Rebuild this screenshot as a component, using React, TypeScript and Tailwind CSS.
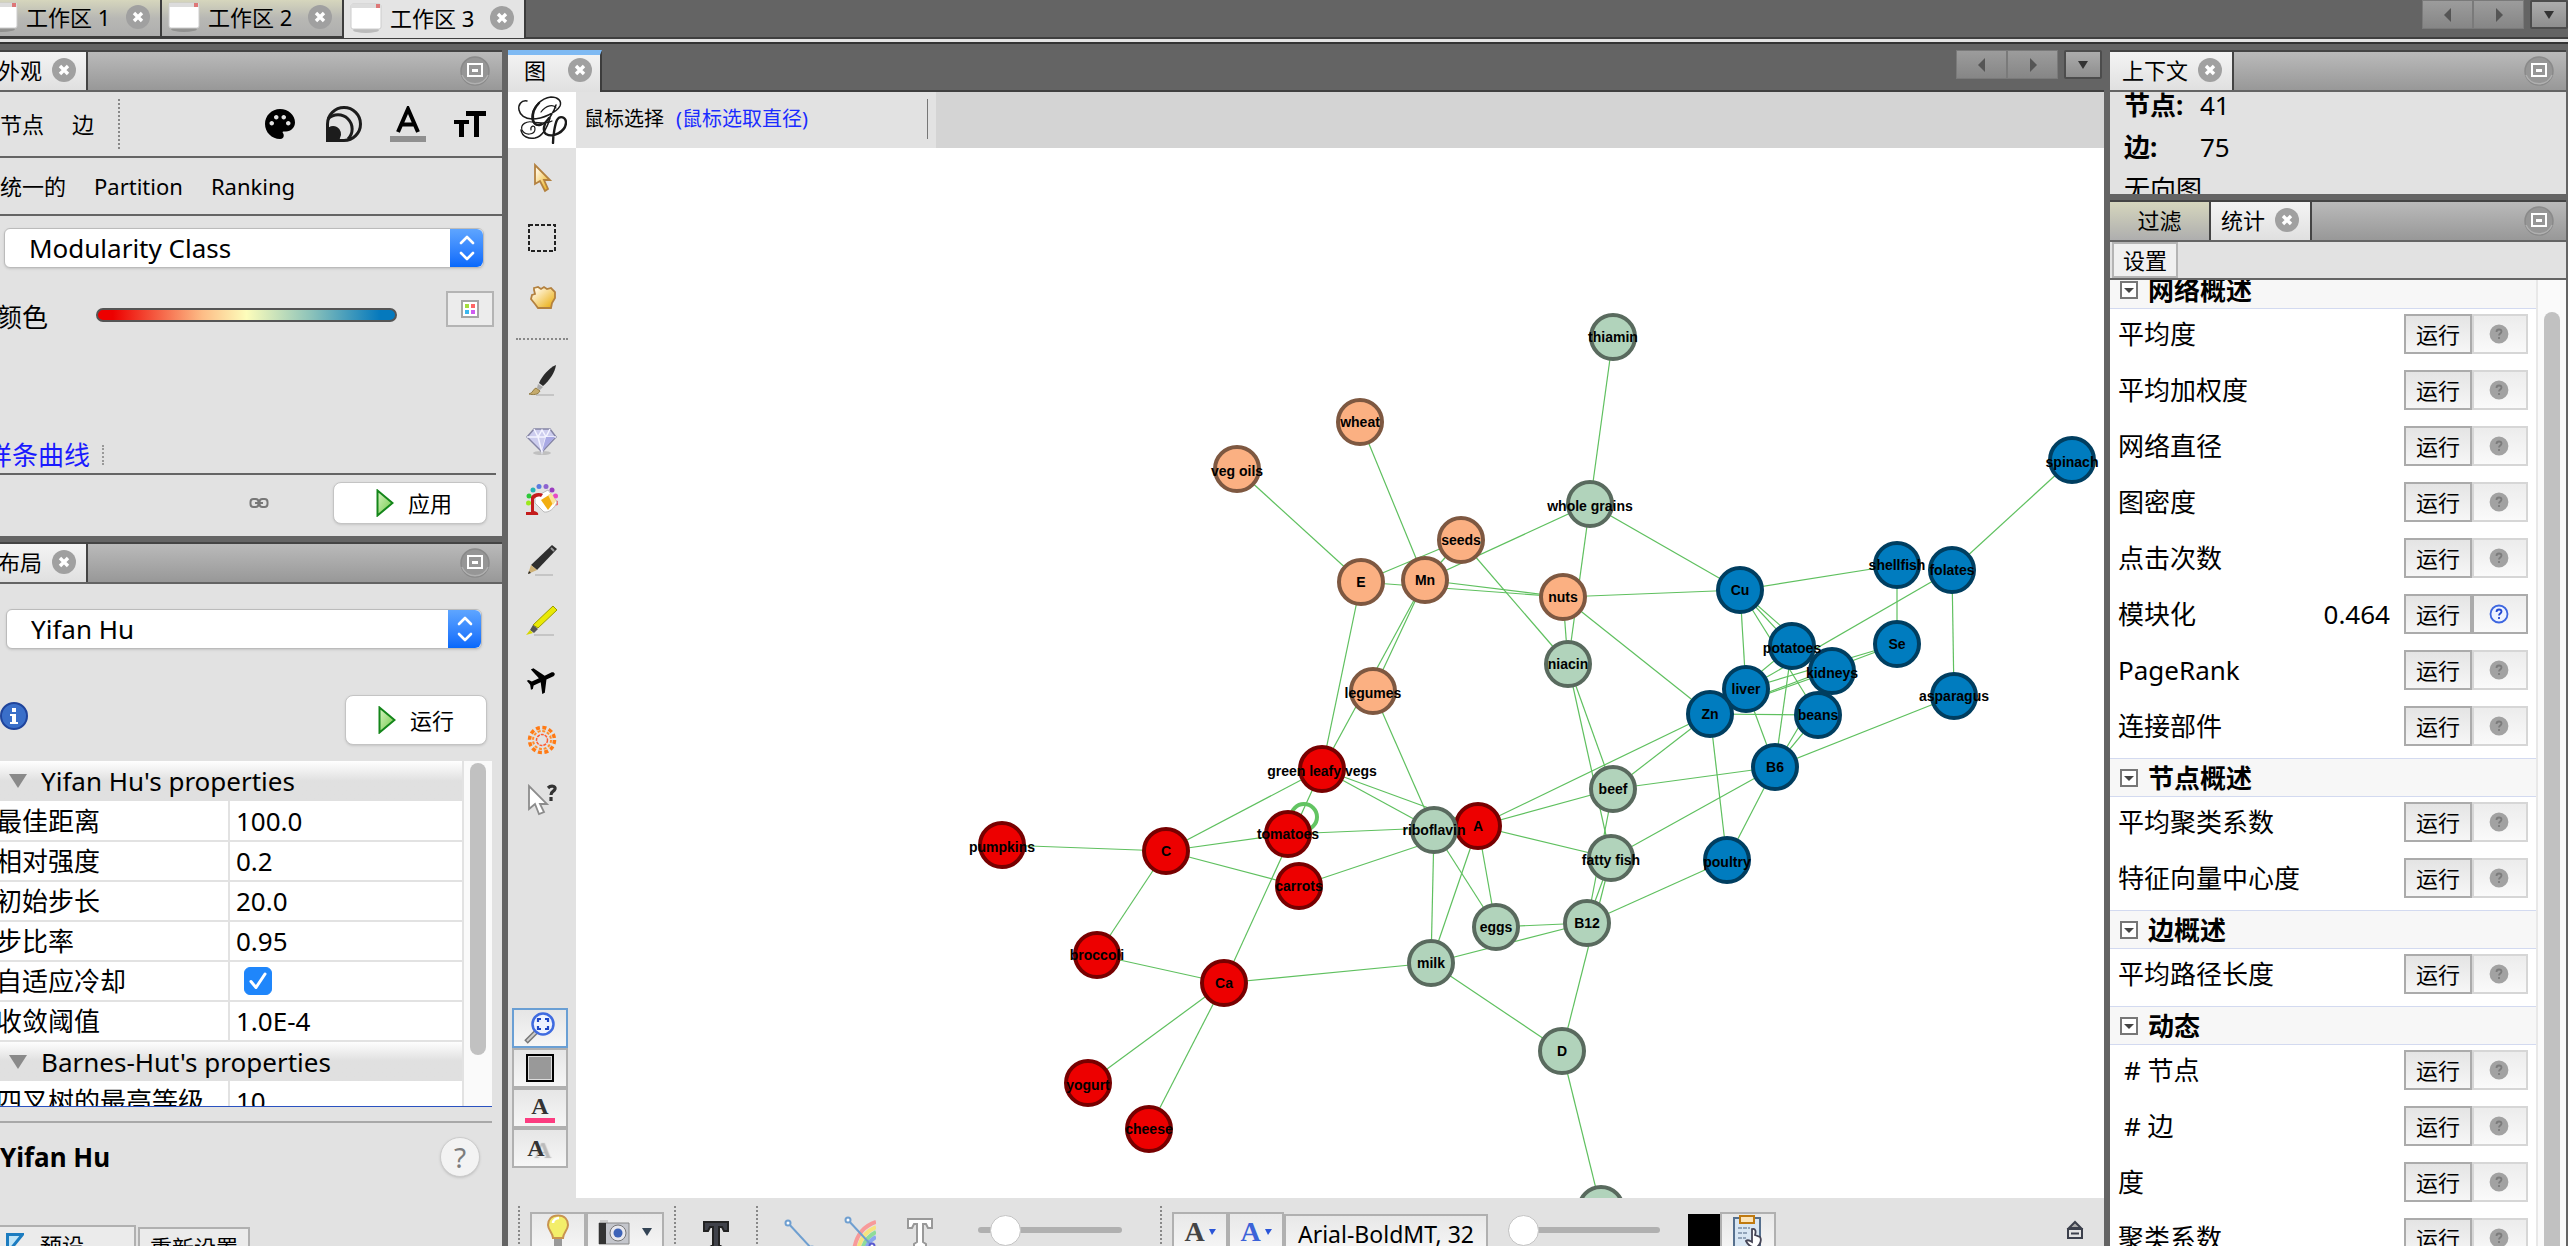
import React, { useState } from 'react';
import { MdPalette, MdFlight } from 'react-icons/md';
import clsx from 'clsx';

type Group = 'red' | 'orange' | 'green' | 'blue';

const groups: Record<Group, { fill: string; stroke: string }> = {
  red: { fill: '#ed0000', stroke: '#770000' },
  orange: { fill: '#fbb082', stroke: '#7e5841' },
  green: { fill: '#b1d3bb', stroke: '#596a5e' },
  blue: { fill: '#007cbf', stroke: '#003e60' },
};

const nodes: [string, number, number, Group][] = [
  ['thiamin', 1613, 337, 'green'],
  ['wheat', 1360, 422, 'orange'],
  ['veg oils', 1237, 469, 'orange'],
  ['whole grains', 1590, 504, 'green'],
  ['seeds', 1461, 540, 'orange'],
  ['E', 1361, 582, 'orange'],
  ['Mn', 1425, 580, 'orange'],
  ['nuts', 1563, 597, 'orange'],
  ['niacin', 1568, 664, 'green'],
  ['legumes', 1373, 691, 'orange'],
  ['green leafy vegs', 1322, 769, 'red'],
  ['beef', 1613, 789, 'green'],
  ['spinach', 2072, 460, 'blue'],
  ['shellfish', 1897, 565, 'blue'],
  ['folates', 1952, 570, 'blue'],
  ['Cu', 1740, 590, 'blue'],
  ['potatoes', 1792, 646, 'blue'],
  ['Se', 1897, 644, 'blue'],
  ['kidneys', 1832, 671, 'blue'],
  ['liver', 1746, 689, 'blue'],
  ['Zn', 1710, 714, 'blue'],
  ['beans', 1818, 715, 'blue'],
  ['asparagus', 1954, 696, 'blue'],
  ['B6', 1775, 767, 'blue'],
  ['poultry', 1727, 860, 'blue'],
  ['pumpkins', 1002, 845, 'red'],
  ['C', 1166, 851, 'red'],
  ['tomatoes', 1288, 834, 'red'],
  ['carrots', 1299, 886, 'red'],
  ['broccoli', 1097, 955, 'red'],
  ['Ca', 1224, 983, 'red'],
  ['yogurt', 1088, 1083, 'red'],
  ['cheese', 1149, 1129, 'red'],
  ['A', 1478, 826, 'red'],
  ['riboflavin', 1434, 830, 'green'],
  ['fatty fish', 1611, 858, 'green'],
  ['eggs', 1496, 927, 'green'],
  ['B12', 1587, 923, 'green'],
  ['milk', 1431, 963, 'green'],
  ['D', 1562, 1051, 'green'],
  ['', 1601, 1209, 'green'],
];

const edges: Record<string, string[]> = {
  'whole grains': ['thiamin', 'Mn', 'Cu', 'niacin'],
  Mn: ['wheat', 'seeds', 'nuts', 'legumes', 'green leafy vegs'],
  E: ['veg oils', 'seeds', 'nuts', 'green leafy vegs'],
  niacin: ['seeds', 'nuts', 'beef', 'fatty fish'],
  Cu: ['nuts', 'shellfish', 'potatoes', 'kidneys', 'beans', 'liver'],
  Zn: ['nuts', 'beef', 'A', 'liver', 'beans', 'potatoes', 'kidneys', 'poultry'],
  Se: ['shellfish', 'liver', 'Zn'],
  folates: ['spinach', 'liver', 'asparagus'],
  B6: ['asparagus', 'beans', 'kidneys', 'potatoes', 'liver', 'beef', 'fatty fish', 'poultry'],
  A: ['beef', 'fatty fish', 'eggs', 'milk', 'carrots', 'tomatoes', 'green leafy vegs'],
  riboflavin: ['green leafy vegs', 'legumes', 'milk', 'eggs'],
  C: ['green leafy vegs', 'tomatoes', 'carrots', 'pumpkins', 'broccoli'],
  Ca: ['green leafy vegs', 'broccoli', 'yogurt', 'cheese', 'milk'],
  B12: ['eggs', 'milk', 'beef', 'fatty fish', 'poultry'],
  D: ['milk', 'fatty fish', ''],
};

const byName = Object.fromEntries(nodes.map((n) => [n[0], n]));

// Labels with both ascenders and descenders hang a little lower
const labelShift = (label: string) => (/[gpy]/.test(label) && /[bdfhklt]/.test(label) ? 7 : 5);

function Graph() {
  return (
    <svg className="block h-full w-full" viewBox="576 148 1528 1050" preserveAspectRatio="xMidYMid slice">
      <g stroke="#5fc05f" strokeWidth="1.2">
        {Object.entries(edges).flatMap(([from, list]) =>
          list.map((to) => (
            <line key={from + '-' + to} x1={byName[from][1]} y1={byName[from][2]} x2={byName[to][1]} y2={byName[to][2]} />
          ))
        )}
      </g>
      <circle cx="1304" cy="817" r="13" fill="none" stroke="#62c462" strokeWidth="4" />
      {nodes.map(([label, x, y, group]) => (
        <circle key={label} cx={x} cy={y} r="22" fill={groups[group].fill} stroke={groups[group].stroke} strokeWidth="4" />
      ))}
      <g fontFamily="'Liberation Sans', Arial, sans-serif" fontWeight="700" fontSize="14" textAnchor="middle">
        {nodes.map(([label, x, y]) => (
          <text key={label} x={x} y={y + labelShift(label)}>{label}</text>
        ))}
      </g>
    </svg>
  );
}

function CloseButton() {
  return (
    <button type="button" aria-label="关闭" className="shrink-0">
      <svg width="24" height="24" viewBox="0 0 24 24">
        <circle cx="12" cy="12" r="12" fill="#a0a0a0" />
        <path d="M8 8l8 8M16 8l-8 8" stroke="#fff" strokeWidth="3.4" />
      </svg>
    </button>
  );
}

function MinimizeButton() {
  return (
    <button type="button" aria-label="最小化" className="mr-3 ml-auto">
      <svg width="30" height="30" viewBox="0 0 30 30">
        <circle cx="15" cy="15" r="14" fill="#969696" stroke="#8a8a8a" strokeWidth="1.5" />
        <path d="M2 19a14 14 0 0 0 26 0" fill="none" stroke="#b0b0b0" strokeWidth="1.5" />
        <path d="M8 8h14v12H8z" fill="none" stroke="#fff" strokeWidth="2" />
        <path d="M12 13h6v3h-6z" fill="#fff" />
      </svg>
    </button>
  );
}

function ScrollButtons() {
  const box = 'flex items-center justify-center bg-gradient-to-b from-[#9c9c9c] to-[#868686] border border-[#7a7a7a]';
  return (
    <div className="flex h-[29px]">
      <button type="button" aria-label="向左" className={clsx(box, 'w-[51px]')}>
        <svg width="8" height="14"><path d="M7 0v14L0 7z" fill="#555" /></svg>
      </button>
      <button type="button" aria-label="向右" className={clsx(box, 'w-[51px]')}>
        <svg width="8" height="14"><path d="M1 0v14l7-7z" fill="#555" /></svg>
      </button>
      <button type="button" aria-label="列表" className="ml-1.5 flex w-[38px] items-center justify-center rounded-xs border-2 border-[#4c4c4c] bg-gradient-to-b from-[#acacac] to-[#8e8e8e]">
        <svg width="10" height="8"><path d="M0 0h10L5 8z" fill="#333" /></svg>
      </button>
    </div>
  );
}

function WorkspaceTab({ label, active }: { label: string; active?: boolean }) {
  return (
    <div
      className={clsx(
        'flex h-[38px] w-[182px] items-center border-r-2 border-[#3c3c3c] pb-0.5 pl-1.5',
        active ? 'bg-[#e4e4e4]' : 'border-b-2 bg-gradient-to-b from-[#d6d6bd] via-[#b8b8b4] to-[#aeaeae]'
      )}
    >
      <svg width="32" height="30" viewBox="0 0 32 30" className="mr-2 shrink-0">
        <ellipse cx="16" cy="27" rx="13" ry="3" fill="#000" opacity=".18" />
        <rect x="1" y="1" width="30" height="25" rx="2" fill="#fff" stroke="#ccc" />
        <path d="M1 1h30v4H1z" fill="#dcdcdc" />
        <path d="M26 1h4v4h-4z" fill="#d77" />
      </svg>
      <button type="button" className="mr-4 whitespace-nowrap">{label}</button>
      <CloseButton />
    </div>
  );
}

function PanelHeader({ children }: { children: React.ReactNode }) {
  return (
    <div className="flex h-[42px] shrink-0 items-center border-t-2 border-b-2 border-t-[#444] border-b-[#646464] bg-gradient-to-b from-[#bababa] to-[#989898]">
      {children}
      <MinimizeButton />
    </div>
  );
}

function ActiveTab({ label, className }: { label: string; className: string }) {
  return (
    <div className={clsx('flex h-full items-center border-r-2 border-[#444] bg-gradient-to-b from-[#f4f4f4] to-[#e0e0e0] pb-0.5 whitespace-nowrap', className)}>
      <button type="button">{label}</button>
      <CloseButton />
    </div>
  );
}

function Dropdown({ label, value }: { label: string; value: string }) {
  return (
    <div className="relative flex h-10 rounded-md border border-[#bbb] bg-white shadow-sm">
      <select aria-label={label} className="h-full w-full appearance-none pl-6 text-[26px] leading-8 outline-none">
        <option>{value}</option>
      </select>
      <span className="pointer-events-none absolute inset-y-0 right-0 flex w-[33px] items-center justify-center rounded-r-md bg-gradient-to-b from-[#5ea5ff] to-[#0568fb]">
        <svg width="16" height="26" viewBox="0 0 16 26" fill="none" stroke="#fff" strokeWidth="2.6" strokeLinecap="round" strokeLinejoin="round">
          <path d="M2 8l6-6 6 6M2 18l6 6 6-6" />
        </svg>
      </span>
    </div>
  );
}

function PlayIcon() {
  return (
    <svg width="18" height="28" viewBox="0 0 18 28">
      <defs>
        <linearGradient id="play" x1="0" y1="0" x2="1" y2="1">
          <stop offset="0" stopColor="#d8f3c4" />
          <stop offset="1" stopColor="#6ec943" />
        </linearGradient>
      </defs>
      <path d="M1.5 1.5l15 12.5-15 12.5z" fill="url(#play)" stroke="#14861a" strokeWidth="2" />
    </svg>
  );
}

function DottedLine() {
  return <span className="h-[50px] w-0 shrink-0 border-l-2 border-dotted border-[#888]" />;
}

function AppearancePanel() {
  return (
    <section className="flex h-[486px] shrink-0 flex-col overflow-hidden bg-[#e2e2e2]">
      <PanelHeader>
        <ActiveTab label="外观" className="-ml-1 w-[92px] gap-2.5 pl-0.5" />
      </PanelHeader>
      <div className="flex h-[66px] shrink-0 items-center border-b-2 border-[#646464]">
        <button type="button">节点</button>
        <button type="button" className="mr-6 ml-7">边</button>
        <DottedLine />
        <div className="mr-4 ml-auto flex items-center gap-7">
          <button type="button" aria-label="颜色"><MdPalette className="h-9 w-9" /></button>
          <button type="button" aria-label="大小">
            <svg width="36" height="36" viewBox="0 0 36 36" fill="none" stroke="#1c1c1c" strokeWidth="3">
              <path d="M1.5 18a16.500 16.500 0 1 1 16.500 16.500H1.500z" />
              <path d="M2 13a11.500 11.500 0 1 1 20 20" />
              <path d="M0 24a8 8 0 0 1 14 8l-1 4H0z" fill="#1c1c1c" stroke="none" />
            </svg>
          </button>
          <button type="button" aria-label="标签颜色">
            <svg width="36" height="36" viewBox="0 0 36 36">
              <path d="M8 26L18 3l10 23M11 18.500h14" fill="none" stroke="#000" strokeWidth="4" />
              <path d="M0 30h36v6H0z" fill="#909090" />
            </svg>
          </button>
          <button type="button" aria-label="标签大小">
            <svg width="32" height="26" viewBox="0 0 32 26">
              <path d="M12 0h20v5h-7v21h-5V5h-8zM0 9h15v4h-5v13H5V13H0z" />
            </svg>
          </button>
        </div>
      </div>
      <div className="flex h-[58px] shrink-0 items-center gap-7 border-b-2 border-[#646464]">
        <button type="button">统一的</button>
        <button type="button">Partition</button>
        <button type="button">Ranking</button>
      </div>
      <div className="mt-3 mr-[18px] ml-1">
        <Dropdown label="属性" value="Modularity Class" />
      </div>
      <div className="-ml-1 mt-[22px] flex h-[38px] shrink-0 items-center">
        <span className="w-[100px] pt-4 text-[26px]">颜色</span>
        <span className="mt-3 h-[14px] w-[301px] rounded-full border-2 border-[#555] bg-[linear-gradient(to_right,#ed0000_5%,#fdbc86_35%,#fdfdbb_50%,#8bc2ba_72%,#0579bd_95%)]" />
        <button type="button" aria-label="调色板" className="mr-2 ml-auto flex h-9 w-12 items-center justify-center border-2 border-[#b4b4b4] bg-[#ececec]">
          <svg width="18" height="18" viewBox="0 0 18 18">
            <rect x="1" y="1" width="16" height="16" fill="#fff" stroke="#a5a5a5" strokeWidth="2" />
            <path d="M4 4h4v4H4z" fill="#a4dd3c" />
            <path d="M10 4h4v4h-4z" fill="#f66" />
            <path d="M4 10h4v4H4z" fill="#3ab7ee" />
            <path d="M10 10h4v4h-4z" fill="#cf5cf0" />
          </svg>
        </button>
      </div>
      <div className="mt-auto mr-1.5 flex items-center border-b-2 border-[#646464]">
        <a href="#spline" className="-ml-3.5 text-[26px] leading-9 text-[#1a1aff]">样条曲线</a>
        <span className="ml-3 h-5 border-l-2 border-dotted border-[#999]" />
      </div>
      <div className="mr-[15px] flex h-[61px] shrink-0 items-center justify-end gap-16 pb-1.5">
        <svg width="20" height="12" viewBox="0 0 20 12" fill="none" stroke="#777" strokeWidth="2">
          <rect x="1.5" y="2" width="8" height="8" rx="3" />
          <rect x="10.5" y="2" width="8" height="8" rx="3" />
          <path d="M6 6h8" />
        </svg>
        <button type="button" className="flex h-[42px] w-[154px] items-center justify-center gap-3.5 rounded-lg border border-[#c4c4c4] bg-white pl-2 shadow-sm">
          <PlayIcon />
          应用
        </button>
      </div>
    </section>
  );
}

function CategoryRow({ title }: { title: string }) {
  return (
    <tr className="h-10 bg-gradient-to-b from-white to-[#e0e0e0] to-50%">
      <th colSpan={2} className="pl-[9px] text-left font-normal">
        <span className="flex items-center gap-3.5">
          <svg width="18" height="14"><path d="M0 0h18L9 14z" fill="#8a8a8a" /></svg>
          {title}
        </span>
      </th>
    </tr>
  );
}

function PropertyRow({ name, children }: { name: string; children: React.ReactNode }) {
  return (
    <tr className="h-10 border-b-2 border-[#e2e2e2] bg-white">
      <th className="border-r-2 border-[#e2e2e2] p-0 text-left font-normal whitespace-nowrap">
        <span className="-ml-1">{name}</span>
      </th>
      <td className="py-0 pl-1.5">{children}</td>
    </tr>
  );
}

function LayoutPanel() {
  const [adaptive, setAdaptive] = useState(true);

  return (
    <section className="mt-1.5 flex min-h-0 flex-1 flex-col overflow-hidden bg-[#e2e2e2]">
      <PanelHeader>
        <ActiveTab label="布局" className="-ml-1 w-[92px] gap-2.5 pl-0.5" />
      </PanelHeader>
      <div className="mt-[25px] mr-5 ml-1.5">
        <Dropdown label="布局" value="Yifan Hu" />
      </div>
      <div className="mt-[46px] mr-[15px] flex h-[50px] shrink-0 items-center justify-between">
        <svg width="28" height="28" viewBox="0 0 28 28" className="-mt-2">
          <circle cx="14" cy="14" r="13" fill="#3a6fc9" stroke="#1f449c" strokeWidth="2" />
          <path d="M10 12h6v8h2v2h-8v-2h2v-6h-2zM12 6h4v4h-4z" fill="#fff" />
        </svg>
        <button type="button" className="flex h-full w-[142px] items-center justify-center gap-3.5 rounded-lg border border-[#c4c4c4] bg-white shadow-sm">
          <PlayIcon />
          运行
        </button>
      </div>
      <div className="mt-4 mr-2.5 flex h-[346px] shrink-0 overflow-hidden border-b border-[#2a52c0] bg-white">
        <table className="h-fit flex-1 table-fixed border-collapse text-[26px] leading-8">
          <colgroup>
            <col className="w-[229px]" />
            <col />
          </colgroup>
          <tbody>
            <CategoryRow title="Yifan Hu's properties" />
            <PropertyRow name="最佳距离">100.0</PropertyRow>
            <PropertyRow name="相对强度">0.2</PropertyRow>
            <PropertyRow name="初始步长">20.0</PropertyRow>
            <PropertyRow name="步比率">0.95</PropertyRow>
            <PropertyRow name="自适应冷却">
              <label className="relative ml-2 block h-7 w-7">
                <input
                  type="checkbox"
                  aria-label="自适应冷却"
                  checked={adaptive}
                  onChange={() => setAdaptive(!adaptive)}
                  className="block h-7 w-7 appearance-none rounded-md border border-[#bbb] checked:border-[#1f86fb] checked:bg-[#1f86fb]"
                />
                {adaptive && (
                  <svg viewBox="0 0 28 28" className="pointer-events-none absolute inset-0">
                    <path d="M7 14.5l5 6L21 7" fill="none" stroke="#fff" strokeWidth="3" strokeLinecap="round" strokeLinejoin="round" />
                  </svg>
                )}
              </label>
            </PropertyRow>
            <PropertyRow name="收敛阈值">1.0E-4</PropertyRow>
            <CategoryRow title="Barnes-Hut's properties" />
            <PropertyRow name="四叉树的最高等级">10</PropertyRow>
          </tbody>
        </table>
        <div className="w-[30px] border-l-2 border-[#e2e2e2] bg-[#fafafa] px-1.5 pt-0.5">
          <div className="h-[292px] w-4 rounded-full bg-[#c1c1c1]" />
        </div>
      </div>
      <div className="mt-3.5 mr-2.5 flex items-center justify-between border-t-2 border-[#a8a8a8] pt-3.5 pr-3">
        <h2 className="text-[26px] font-bold">Yifan Hu</h2>
        <button type="button" className="h-10 w-10 rounded-full border border-[#ccc] bg-[#f3f3f3] text-[28px] leading-8 text-[#7c7c7c] shadow-sm">?</button>
      </div>
      <div className="mt-12 flex shrink-0 gap-0.5">
        <button type="button" className="-ml-1 flex h-10 w-[140px] items-center border-2 border-[#b0b0b0] bg-[#ebebeb] pl-2">
          <svg width="18" height="24" viewBox="0 0 18 24" className="mr-4">
            <path d="M1.5 1.5h15L1.5 20z" fill="#bfe4f7" stroke="#1c7cc0" strokeWidth="3" />
          </svg>
          预设
        </button>
        <button type="button" className="mt-0.5 h-10 w-[112px] border-2 border-[#b0b0b0] bg-[#ebebeb]">重新设置</button>
      </div>
    </section>
  );
}

const tools: { label: string; icon: React.ReactNode }[] = [
  {
    label: '选择',
    icon: (
      <svg width="32" height="32" viewBox="0 0 32 32">
        <path d="M9 3v19l5-3 5 10 3-2-4-9h6z" fill="url(#gold)" stroke="#b3813f" strokeWidth="1.8" />
      </svg>
    ),
  },
  {
    label: '矩形选择',
    icon: (
      <svg width="32" height="32" viewBox="0 0 32 32">
        <rect x="3" y="3" width="26" height="26" fill="none" stroke="#222" strokeWidth="2" strokeDasharray="4 2" />
      </svg>
    ),
  },
  {
    label: '拖动',
    icon: (
      <svg width="32" height="32" viewBox="0 0 32 32">
        <path d="M8 6l4-1 3 2 3-2 3 2 4-1 4 4v6l-3 5-1 5H12l-3-4-4-5 1-4 3-1-1-4z" fill="url(#gold)" stroke="#b3813f" strokeWidth="1.8" />
      </svg>
    ),
  },
  {
    label: '画笔',
    icon: (
      <svg width="32" height="32" viewBox="0 0 32 32">
        <path d="M10 31h18" stroke="#bbb" strokeWidth="1.5" />
        <path d="M30 1c-7 3-14 11-17 18l4 3C24 16 29 8 30 1z" fill="#2a2a2a" />
        <path d="M12 20l5 3-3 3-3-2z" fill="#aaa" />
        <path d="M10 24l4 3c-2 4-7 4-11 3 4-1 4-5 7-6z" fill="#c5ab6d" stroke="#927c45" />
      </svg>
    ),
  },
  {
    label: '调整大小',
    icon: (
      <svg width="32" height="32" viewBox="0 0 32 32">
        <ellipse cx="16" cy="29" rx="9" ry="2" fill="#000" opacity=".15" />
        <path d="M8 5h16l6 8-14 15L1 13z" fill="#cdcdee" stroke="#8585a5" strokeWidth="1.5" />
        <path d="M8 5l4 8 4-7 4 7 4-8M1 13h29M12 13l4 15 4-15" fill="none" stroke="#f4f4ff" strokeWidth="1.5" />
        <path d="M20 13h9L16 27z" fill="#a9a9e4" />
      </svg>
    ),
  },
  {
    label: '上色',
    icon: (
      <svg width="32" height="32" viewBox="0 0 32 32">
        <circle cx="2.5" cy="19" r="2.5" fill="#9be81c" />
        <circle cx="3" cy="12" r="2.5" fill="#2cc93a" />
        <circle cx="7" cy="6" r="2.5" fill="#27b4b4" />
        <circle cx="13" cy="2.5" r="2.5" fill="#5a7ae0" />
        <circle cx="20" cy="2.5" r="2.5" fill="#8d63cf" />
        <circle cx="26" cy="6" r="2.5" fill="#9b3cc0" />
        <circle cx="29.5" cy="12" r="2.5" fill="#e84cc4" />
        <circle cx="30" cy="19" r="2.5" fill="#f0626a" />
        <path d="M9 13l13-7 9 12c-2 6-8 11-13 10L9 19z" fill="#fff" stroke="#bbb" />
        <path d="M5 28V13c2-4 8-5 12-3l-2 3c-3-1-5 0-7 2v12c3 1 5 2 4 4H0v-3z" fill="#c41c1c" />
        <path d="M15 16l8-5 5 7-6 8z" fill="#f2ae10" />
        <path d="M22 11l3-2 5 8-3 4z" fill="#fbe49a" />
      </svg>
    ),
  },
  {
    label: '铅笔',
    icon: (
      <svg width="32" height="32" viewBox="0 0 32 32">
        <path d="M9 31h18" stroke="#bbb" strokeWidth="1.5" />
        <path d="M26 1l5 4L11 26l-6-5z" fill="#2e2e2e" />
        <path d="M25 4l3 3" stroke="#999" strokeWidth="2" />
        <path d="M5 21l6 5-9 4z" fill="#cdb074" />
        <path d="M3 27l2 2-3 1z" fill="#222" />
      </svg>
    ),
  },
  {
    label: '荧光笔',
    icon: (
      <svg width="32" height="32" viewBox="0 0 32 32">
        <path d="M8 31h20" stroke="#bbb" strokeWidth="1.5" />
        <path d="M27 2l4 4L12 24l-5-3z" fill="#e9e906" stroke="#9c9c00" />
        <path d="M7 21l5 4-4 4-4-3z" fill="#555" />
        <path d="M4 26l3 3-7 2z" fill="#d6d600" />
      </svg>
    ),
  },
  { label: '最短路径', icon: <MdFlight className="h-[34px] w-[34px] rotate-[65deg]" /> },
  {
    label: '热图',
    icon: (
      <svg width="32" height="32" viewBox="0 0 32 32" fill="none">
        <circle cx="16" cy="16" r="12.5" stroke="#ff7a14" strokeWidth="3.5" strokeDasharray="4 2.545" />
        <circle cx="16" cy="16" r="9" stroke="#ff8d2c" strokeWidth="2" strokeDasharray="3 1.712" />
        <circle cx="16" cy="16" r="5.5" stroke="#ff5a30" strokeWidth="1.5" strokeDasharray="3 1" />
      </svg>
    ),
  },
  {
    label: '编辑',
    icon: (
      <svg width="32" height="32" viewBox="0 0 32 32">
        <path d="M3 2v23l6-5 4 10 5-2-4-8h7z" fill="#fff" stroke="#8c8c8c" strokeWidth="1.8" />
        <path d="M22 4c3-3 8-2 7 1-1 3-4 2-4 6M25 13v4" fill="none" stroke="#333" strokeWidth="3.2" />
      </svg>
    ),
  },
];

function ToolButton({ label, icon }: { label: string; icon: React.ReactNode }) {
  return (
    <button type="button" aria-label={label} title={label} className="flex h-[60px] w-full items-center justify-center">
      {icon}
    </button>
  );
}

function SideButton({ label, active, children }: { label: string; active?: boolean; children: React.ReactNode }) {
  return (
    <button
      type="button"
      aria-label={label}
      className={clsx('flex h-10 w-14 items-center justify-center border-2 bg-gradient-to-b from-[#e6e6e6] to-[#f6f6f6]', active ? 'border-[#6a9fd4]' : 'border-[#b0b0b0]')}
    >
      {children}
    </button>
  );
}

function ToolColumn() {
  return (
    <div className="flex w-[68px] shrink-0 flex-col bg-[#e2e2e2] pb-[30px]">
      <svg width="0" height="0" className="absolute">
        <defs>
          <linearGradient id="gold" x1="0" y1="0" x2="1" y2="1">
            <stop offset="0.2" stopColor="#fff3d6" />
            <stop offset="1" stopColor="#e8a800" />
          </linearGradient>
        </defs>
      </svg>
      {tools.slice(0, 3).map((t) => (
        <ToolButton key={t.label} {...t} />
      ))}
      <span className="mx-2 my-2.5 border-t-2 border-dotted border-[#888]" />
      {tools.slice(3).map((t) => (
        <ToolButton key={t.label} {...t} />
      ))}
      <div className="mt-auto pl-1">
        <SideButton label="居中" active>
          <svg width="32" height="32" viewBox="0 0 32 32" fill="none">
            <path d="M2 30l11-11" stroke="#777" strokeWidth="5" />
            <path d="M3 29l9-9" stroke="#ccc" strokeWidth="2" />
            <circle cx="19" cy="12" r="10.5" fill="#eef3ff" stroke="#3f6be0" strokeWidth="2.5" />
            <path d="M14 10V7h3M21 7h3v3M24 14v3h-3M17 17h-3v-3" stroke="#1c45c4" strokeWidth="2.2" />
          </svg>
        </SideButton>
        <SideButton label="背景颜色">
          <span className="h-6 w-6 border border-[#ddd] bg-[#999] outline-2 outline-black" />
        </SideButton>
        <SideButton label="标签颜色">
          <span className="border-b-[5px] border-[#fc3c80] px-1.5 font-['Liberation_Serif',serif] text-[24px] leading-6 font-bold text-[#333]">A</span>
        </SideButton>
        <SideButton label="标签可见">
          <span className="pr-2 font-['Liberation_Serif',serif] text-[24px] leading-6 font-bold text-[#333] [text-shadow:7px_2px_1px_#bbb]">A</span>
        </SideButton>
      </div>
    </div>
  );
}

function BottomToolbar() {
  const button = 'flex h-10 items-center justify-center border-2 border-[#b0b0b0] bg-gradient-to-b from-[#e8e8e8] to-[#f6f6f6]';
  const slider =
    'h-8 appearance-none bg-transparent [&::-webkit-slider-runnable-track]:h-1.5 [&::-webkit-slider-runnable-track]:rounded-sm [&::-webkit-slider-runnable-track]:bg-[#b0b0b0] [&::-webkit-slider-thumb]:-mt-3 [&::-webkit-slider-thumb]:h-[31px] [&::-webkit-slider-thumb]:w-[31px] [&::-webkit-slider-thumb]:appearance-none [&::-webkit-slider-thumb]:rounded-full [&::-webkit-slider-thumb]:border [&::-webkit-slider-thumb]:border-[#c4c4c4] [&::-webkit-slider-thumb]:bg-white';

  return (
    <div className="flex h-12 shrink-0 items-start overflow-hidden bg-[#e2e2e2] pt-2 pl-2.5">
      <DottedLine />
      <div className="mt-1.5 ml-2.5 flex">
        <button type="button" aria-label="灯泡" className={clsx(button, 'w-14')}>
          <svg width="24" height="36" viewBox="0 0 24 36">
            <path d="M12 1.5C5 1.5 2 6 2 11s5 8 5 13h10c0-5 5-8 5-13S19 1.5 12 1.5z" fill="#f3ee6a" stroke="#c89350" strokeWidth="2" />
            <path d="M7 9c0-3 3-5 6-5" fill="none" stroke="#fff" strokeWidth="2.5" />
            <path d="M8 25h8v9H8z" fill="#999" />
          </svg>
        </button>
        <button type="button" aria-label="截图" className={clsx(button, 'w-[78px] gap-3')}>
          <svg width="32" height="26" viewBox="0 0 32 26">
            <path d="M2 1h8v3H2z" fill="#ccc" />
            <path d="M1 4h30v21H1z" fill="#c4c6cc" stroke="#888" />
            <path d="M1 4h7v21H1z" fill="#333" />
            <circle cx="20" cy="14" r="8" fill="#e8e8ee" stroke="#777" />
            <circle cx="20" cy="14" r="4.5" fill="#3d63b8" />
          </svg>
          <svg width="10" height="8"><path d="M0 0h10L5 8z" fill="#345" /></svg>
        </button>
      </div>
      <div className="ml-2.5 flex gap-[26px]">
        <DottedLine />
        <button type="button" aria-label="节点标签" className="pt-2.5">
          <svg width="28" height="32" viewBox="0 0 28 32">
            <path d="M2 2h24v9h-4l-2-4h-3v18l3 2v4H8v-4l3-2V7H8l-2 4H2z" fill="#40424a" stroke="#222" strokeWidth="2" />
          </svg>
        </button>
        <DottedLine />
        <button type="button" aria-label="显示边" className="pt-2.5">
          <svg width="32" height="34" viewBox="0 0 32 34" fill="#fff" stroke="#6f9fd0" strokeWidth="2">
            <path d="M4 4l24 26" />
            <circle cx="4" cy="4" r="2.5" />
            <circle cx="28" cy="30" r="2.5" />
          </svg>
        </button>
      </div>
      <div className="ml-7 flex gap-[30px] pt-2.5">
        <button type="button" aria-label="边颜色">
          <svg width="32" height="34" viewBox="0 0 32 34" fill="none" strokeWidth="4">
            <path d="M10 34C12 20 20 10 32 6" stroke="#f79a9a" />
            <path d="M14 34C16 23 22 15 32 11" stroke="#f6e37f" />
            <path d="M18 34C20 26 24 20 32 16" stroke="#8fdc9a" />
            <path d="M22 34C23 29 26 24 32 21" stroke="#8aa6f0" />
            <path d="M4 4l24 26" stroke="#6f9fd0" strokeWidth="2" />
            <circle cx="4" cy="4" r="2.5" fill="#fff" stroke="#6f9fd0" strokeWidth="2" />
            <circle cx="28" cy="30" r="2.5" fill="#fff" stroke="#5a5ad0" strokeWidth="2" />
          </svg>
        </button>
        <button type="button" aria-label="边标签">
          <svg width="28" height="32" viewBox="0 0 28 32">
            <path d="M2 2h24v9h-4l-2-4h-3v18l3 2v4H8v-4l3-2V7H8l-2 4H2z" fill="#fff" stroke="#999" strokeWidth="2" />
          </svg>
        </button>
      </div>
      <input type="range" aria-label="边粗细" defaultValue="11" className={clsx(slider, 'mt-2 ml-11 w-36')} />
      <div className="ml-[38px] flex">
        <DottedLine />
        <div className="mt-1.5 ml-2.5 flex">
          <button type="button" aria-label="字体" className={clsx(button, "w-14 gap-1 font-['Liberation_Serif',serif] text-[28px] font-bold text-[#444]")}>
            A<svg width="7" height="6"><path d="M0 0h7L3 6z" fill="#2a55d8" /></svg>
          </button>
          <button type="button" aria-label="标签模式" className={clsx(button, "w-14 gap-1 font-['Liberation_Serif',serif] text-[28px] font-bold text-[#3c63d8]")}>
            A<svg width="7" height="6"><path d="M0 0h7L3 6z" fill="#2a55d8" /></svg>
          </button>
          <button type="button" className={clsx(button, 'mt-0.5 w-[204px] text-[23px] whitespace-nowrap')}>Arial-BoldMT, 32</button>
        </div>
      </div>
      <input type="range" aria-label="标签大小" defaultValue="0" className={clsx(slider, 'mt-2 ml-5 w-[152px]')} />
      <button type="button" aria-label="标签颜色" className="mt-2 ml-7 h-10 w-8 bg-black" />
      <button type="button" aria-label="配置" className={clsx(button, 'mt-1.5 w-14')}>
        <svg width="32" height="34" viewBox="0 0 32 34">
          <path d="M2 3h26v29H2z" fill="#d8e6f3" stroke="#56708e" strokeWidth="2" />
          <path d="M8 1h14v7H8z" fill="#fce4b8" stroke="#c07a10" strokeWidth="2" />
          <path d="M6 13h12M6 18h10M6 23h8" stroke="#91a4ba" strokeWidth="2" strokeDasharray="4 1" />
          <path d="M20 14c4-1 4 3 3 6l5 2c2 3 0 8-3 10-5 1-9-2-11-6 2-2 4 0 6 1z" fill="#fff" stroke="#445" strokeWidth="1.8" />
        </svg>
      </button>
      <button type="button" aria-label="展开" className="mt-3.5 mr-5 ml-auto">
        <svg width="18" height="20" viewBox="0 0 18 20" fill="none" stroke="#3c404c" strokeWidth="2">
          <path d="M3 8l6-6 6 6z" fill="#aaa" />
          <path d="M2 9h14v9H2zM5 13.5h8" />
        </svg>
      </button>
    </div>
  );
}

function GraphPanel() {
  return (
    <main className="flex min-w-0 flex-1 flex-col overflow-hidden">
      <div className="flex h-[42px] shrink-0 border-b-2 border-[#3f3f3f]">
        <div className="-mb-0.5 flex w-[94px] items-center justify-between border-t-[5px] border-r-2 border-t-[#7fbaf3] border-r-[#3c3c3c] bg-gradient-to-b from-[#f2f2f2] to-[#e0e0e0] pr-2 pb-2 pl-4">
          <button type="button">图</button>
          <CloseButton />
        </div>
        <div className="mr-0.5 ml-auto">
          <ScrollButtons />
        </div>
      </div>
      <div className="flex h-14 shrink-0 items-center bg-[#d4d4d4]">
        <div className="flex h-full w-[68px] items-center justify-center bg-white">
          <svg width="50" height="48" viewBox="0 0 50 48" fill="none" stroke="#1a1a1a" strokeLinecap="round">
            <path d="M10 5C4 4 1 9 2 14s6 9 13 9c11 0 25-7 28-13 2-5-2-9-9-9-10 1-19 11-19 20 0 6 4 10 9 8 7-3 13-13 15-20" strokeWidth="1.5" />
            <path d="M22 7c-5 5-7 11-6 17 1 4 4 6 8 4" strokeWidth="2.4" />
            <path d="M24 16c5-7 13-8 15-4M14 34c-1-4 4-6 4-1 0 6-10 7-13 1-2-6 5-9 10-8 7 0 14 3 20-1" strokeWidth="1.2" />
            <path d="M4 34c1 7 8 9 14 8 9-2 13-13 15-20" strokeWidth="1.5" />
            <path d="M32 22c-5 5-7 13-3 16 7 4 19-2 20-11 0-6-6-8-9-3-2 4-4 16-4 23" strokeWidth="2.4" />
          </svg>
        </div>
        <div className="flex h-full w-[360px] items-center gap-3 bg-[#e2e2e2] pr-2 pb-0.5 pl-2 text-[20px]">
          <span>鼠标选择</span>
          <a href="#diameter" className="text-[#1a2cff]">(鼠标选取直径)</a>
          <span className="ml-auto h-10 w-px bg-[#777]" />
        </div>
      </div>
      <div className="flex min-h-0 flex-1">
        <ToolColumn />
        <div className="min-w-0 flex-1 bg-white">
          <Graph />
        </div>
      </div>
      <BottomToolbar />
    </main>
  );
}

interface Metric {
  name: string;
  value?: string;
}

const sections: { title: string; metrics: Metric[] }[] = [
  {
    title: '网络概述',
    metrics: [
      { name: '平均度' },
      { name: '平均加权度' },
      { name: '网络直径' },
      { name: '图密度' },
      { name: '点击次数' },
      { name: '模块化', value: '0.464' },
      { name: 'PageRank' },
      { name: '连接部件' },
    ],
  },
  { title: '节点概述', metrics: [{ name: '平均聚类系数' }, { name: '特征向量中心度' }] },
  { title: '边概述', metrics: [{ name: '平均路径长度' }] },
  { title: '动态', metrics: [{ name: '# 节点' }, { name: '# 边' }, { name: '度' }, { name: '聚类系数' }] },
];

function MetricRow({ name, value }: Metric) {
  return (
    <li className="flex h-[50px] items-center pr-2 pl-2">
      <span className={clsx('flex-1', name.startsWith('#') && 'pl-1.5')}>{name}</span>
      {value && <span className="pr-3.5">{value}</span>}
      <button type="button" className="h-10 w-[68px] border-2 border-[#ababab] bg-gradient-to-b from-[#e4e4e4] to-[#f6f6f6] text-[22px]">运行</button>
      <button
        type="button"
        aria-label="报告"
        disabled={!value}
        className={clsx('flex h-10 w-14 items-center justify-center border-2 bg-gradient-to-b from-[#ececec] to-[#fafafa] pr-0.5', value ? 'border-[#ababab]' : 'border-[#d6d6d6]')}
      >
        <svg width="20" height="20" viewBox="0 0 20 20" fill="none">
          <circle cx="10" cy="10" r="8.500" fill={value ? '#eef3ff' : '#a2a2a2'} stroke={value ? '#3d66e0' : '#a2a2a2'} strokeWidth="1.8" />
          <path d="M7.500 8c0-3.500 5-3 5-.5 0 2-2.500 2-2.500 4M10 13v2" stroke={value ? '#2449d0' : '#7c7c7c'} strokeWidth="1.8" />
        </svg>
      </button>
    </li>
  );
}

function StatisticsPanel() {
  return (
    <section className="mt-1.5 flex min-h-0 flex-1 flex-col bg-[#e2e2e2]">
      <PanelHeader>
        <button type="button" className="h-full w-[101px] border-r-2 border-[#444] bg-gradient-to-b from-[#d6d6bd] to-[#aeaeae] pb-0.5">过滤</button>
        <ActiveTab label="统计" className="w-[101px] gap-2.5 pl-2.5" />
      </PanelHeader>
      <div className="h-[38px] shrink-0 border-b-2 border-[#646464] pl-0.5">
        <button type="button" className="h-9 w-[66px] border-2 border-[#b4b4b4] bg-[#f0f0f0]">设置</button>
      </div>
      <div className="flex min-h-0 flex-1 overflow-hidden bg-white">
        <div className="-mt-2.5 flex-1 text-[26px]">
          {sections.map((s) => (
            <div key={s.title}>
              <h3 className="flex h-[39px] items-center gap-2.5 border-y border-[#d3daf0] bg-[#f7f7f7] pl-2.5 font-bold">
                <svg width="18" height="18" viewBox="0 0 18 18">
                  <rect x="1" y="1" width="16" height="16" fill="#fff" stroke="#777" strokeWidth="2" />
                  <path d="M4 7h10l-5 5z" fill="#444" />
                </svg>
                {s.title}
              </h3>
              <ul className="flex flex-col gap-1.5 pb-[7px]">
                {s.metrics.map((m) => (
                  <MetricRow key={m.name} {...m} />
                ))}
              </ul>
            </div>
          ))}
        </div>
        <div className="w-[30px] border-l-2 border-[#e8e8e8] bg-[#fafafa] px-1.5 pt-8">
          <div className="h-[1200px] w-4 rounded-full bg-[#c1c1c1]" />
        </div>
      </div>
    </section>
  );
}

export default function App() {
  return (
    <div className="flex h-screen w-full flex-col overflow-hidden bg-[#646464] font-['Noto_Sans','Noto_Sans_CJK_SC',sans-serif] text-[22px] leading-8 text-black">
      <header className="flex h-11 shrink-0 flex-col border-b-2 border-[#333]">
        <div className="flex h-[39px] border-b-2 border-[#3f3f3f]">
          <div className="-ml-5 flex">
            <WorkspaceTab label="工作区 1" />
            <WorkspaceTab label="工作区 2" />
            <WorkspaceTab label="工作区 3" active />
          </div>
          <div className="ml-auto">
            <ScrollButtons />
          </div>
        </div>
        <div className="flex-1 bg-[#e2e2e2]" />
      </header>
      <div className="flex min-h-0 flex-1 gap-1.5 pt-1.5 pr-0.5">
        <aside className="flex w-[502px] shrink-0 flex-col">
          <AppearancePanel />
          <LayoutPanel />
        </aside>
        <GraphPanel />
        <aside className="flex w-[456px] shrink-0 flex-col">
          <section className="flex h-36 shrink-0 flex-col overflow-hidden bg-[#e2e2e2]">
            <PanelHeader>
              <ActiveTab label="上下文" className="w-[124px] gap-2.5 pl-3" />
            </PanelHeader>
            <dl className="-mt-2 grid shrink-0 grid-cols-[76px_1fr] pl-3.5 text-[26px] leading-[42px]">
              <dt className="font-bold">节点:</dt>
              <dd>41</dd>
              <dt className="font-bold">边:</dt>
              <dd>75</dd>
              <dt className="col-span-2">无向图</dt>
            </dl>
          </section>
          <StatisticsPanel />
        </aside>
      </div>
    </div>
  );
}
